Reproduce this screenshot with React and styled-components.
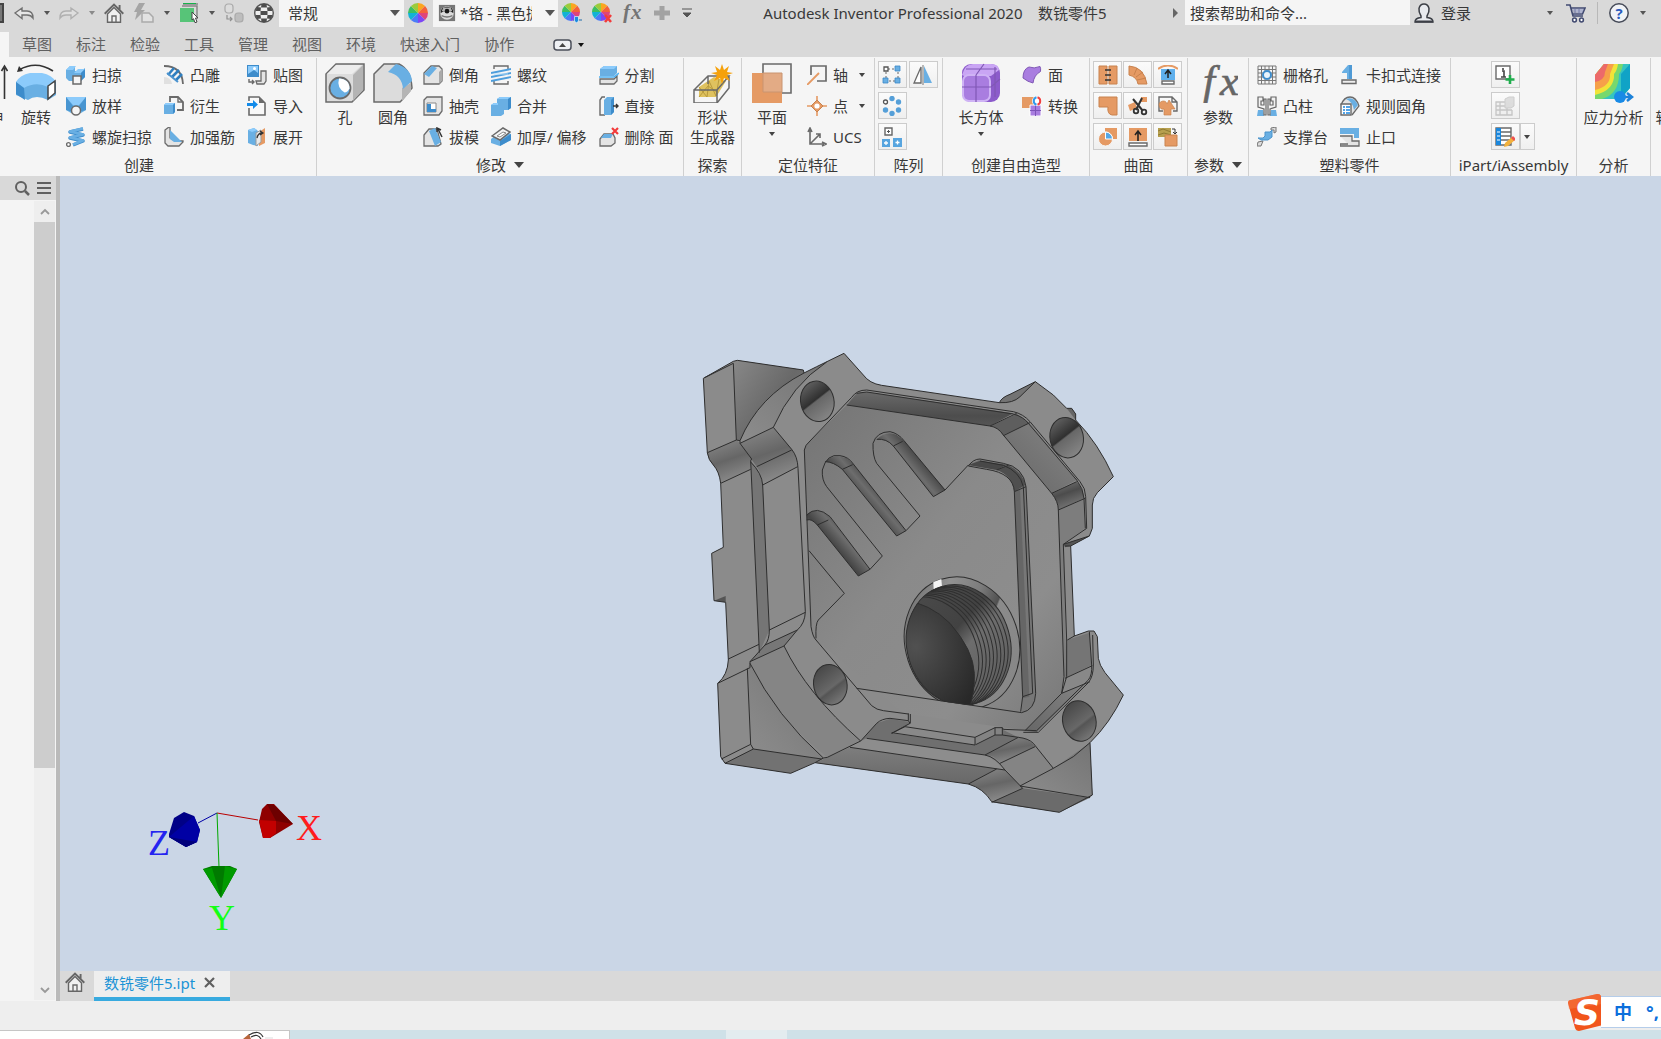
import React, { useState } from "react";
import styled, { createGlobalStyle } from "styled-components";

const color = {
  chrome: "#d9d9d9",
  ribbon: "#f5f5f5",
  canvas: "#cad6e6",
  line: "#d0d0d0",
  text: "#383838",
  muted: "#606060",
  blue: "#69afe3",
  blueDark: "#3d8ccb",
  blueLight: "#8ccbfb",
  orange: "#e59a64",
  orangeDark: "#c8824e",
  gray: "#6a6a6a",
  purple: "#a97de0",
};

const GlobalStyle = createGlobalStyle`
  * {
    box-sizing: border-box;
  }

  body {
    margin: 0;
    overflow: hidden;
    background: ${color.chrome};
    color: ${color.text};
    font-family: "Noto Sans", "Noto Sans CJK SC", sans-serif;
    font-size: 15px;
    line-height: 20px;
  }

  button,
  select,
  input {
    margin: 0;
    padding: 0;
    border: 0;
    border-radius: 0;
    background: none;
    color: inherit;
    font: inherit;
  }

  svg {
    display: block;
    flex: none;
  }
`;

/* ---------- icons ---------- */

const wheelColors = ["#fba51f", "#f4613b", "#e0447a", "#7d46f5", "#4b7bf7", "#12b3d6", "#3cbf62", "#9ccb3b"];

function wedge(i, cx, cy, r) {
  const a = (i * Math.PI) / 4 - Math.PI / 2;
  const b = a + Math.PI / 4;
  return `M${cx} ${cy}L${cx + r * Math.cos(a)} ${cy + r * Math.sin(a)}A${r} ${r} 0 0 1 ${cx + r * Math.cos(b)} ${cy + r * Math.sin(b)}Z`;
}

const Wheel = ({ cx = 10, cy = 10, r = 10 }) => wheelColors.map((fill, i) => <path key={fill} d={wedge(i, cx, cy, r)} fill={fill} />);

const g = { fill: "none", stroke: color.gray, strokeWidth: 1.4 };
const soft = { fill: "#e4e4e4", stroke: color.gray, strokeWidth: 1.3 };
const home = (
  <>
    <path d="M3.500 11v8.300h13V11L10 4.500z" fill="#f0f0f0" stroke="#666" strokeWidth="1.400" />
    <path d="M.700 10.800 10 1.600l9.300 9.200M15.600 2v5" fill="none" stroke="#666" strokeWidth="1.900" />
    <path d="M8 19v-6h4v6" {...g} />
  </>
);

const glyphs = {
  save: <path d="M1 1h18v18H1z" fill="#777" stroke="#444" strokeWidth="2" />,
  undo: <path d="M1 10 8 5v3h5q6 0 6 7-2-3-6-3H8v3.500z" fill="#e6e6e6" stroke="#707070" strokeWidth="1.400" />,
  redo: <path d="m19 10-7-5v3H7q-6 0-6 7 2-3 6-3h5v3.500z" fill="#dedede" stroke="#b0b0b0" strokeWidth="1.400" />,
  home,
  update: (
    <>
      <path d="M5 0h6L7 7h4L1 17l2-8H0z" fill="#a5a5a5" />
      <path d="M8 10h7l4 4v5H8z" fill="#e2e2e2" stroke="#aaa" strokeWidth="1.500" />
    </>
  ),
  pick: (
    <>
      <path d="M1 5h14v14H1z" fill="#57c478" />
      <path d="M3 3h15v12M4 1h15" fill="none" stroke="#888" strokeWidth="1.500" />
      <path d="M4 0h13" stroke="#16b24b" strokeWidth="2" />
      <path d="m13 9 6 6h-2.500l1.500 4-2 .7-1.500-4L13 17z" fill="#fff" stroke="#444" />
    </>
  ),
  copyprops: (
    <g fill="#dcdcdc" stroke="#aaa" strokeWidth="1.200">
      <rect x="1" y="1" width="8" height="9" rx="3" />
      <rect x="11" y="10" width="8" height="9" rx="3" fill="#bdbdbd" />
      <path d="M3 12v4h5m-2-2 2 2-2 2" fill="none" stroke="#909090" />
    </g>
  ),
  checker: (
    <>
      <circle cx="10" cy="10" r="9.300" fill="#eee" stroke="#555" strokeWidth="1.400" />
      <path d="M7.500 1h5l.5 3.500H7zM3 4l4 .5L6.500 8H1.500zM13 4.500 17 4l1.500 4h-5zM6.500 8h7v4h-7zM1.500 12h5l.5 3.500-4 .5zM13.500 12h5L17 16l-4-.5zM7 15.500h6l-.5 3.500h-5z" fill="#4d4d4d" />
    </>
  ),
  wheel: <Wheel />,
  sphere: (
    <>
      <path d="M1 1h18v18H1z" fill="#777" />
      <circle cx="10" cy="10" r="7.500" fill="#dadada" />
      <path d="M3 10q0-7 7-7t7 7q-7-5-14 0z" fill="#161616" />
      <path d="M6 4h8l2 4H4z" fill="#d9d9d9" opacity=".8" />
      <circle cx="10" cy="8" r="2.600" fill="#161616" />
      <path d="M4 13q6 3 12 0" stroke="#777" strokeWidth="1.500" fill="none" />
    </>
  ),
  adjust: (
    <>
      <Wheel cx={9} cy={9} r={9} />
      <path d="M11 17h9" stroke="#4a86b5" strokeWidth="1.300" />
      <path d="M12.500 13.500h4V18l-2 2-2-2z" fill="#1c8be0" stroke="#fff" strokeWidth=".6" />
    </>
  ),
  clear: (
    <>
      <Wheel cx={9} cy={9} r={9} />
      <path d="m13 12 6 7m0-7-6 7" stroke="#f23b3b" strokeWidth="2.600" />
    </>
  ),
  fx: (
    <text x="1 9" y="16" fontFamily="Liberation Serif" fontStyle="italic" fontWeight="bold" fontSize="21" fill="#747474">
      fx
    </text>
  ),
  plus: <path d="M7.500 3h5v4.500H18v5h-5.500V17h-5v-4.500H2v-5h5.500z" fill="#a2a2a2" />,
  user: (
    <>
      <path d="M1 19q0-4 6-4.500V13Q4.500 9 5 5.500 6 1 10 1t5 4.500Q15.500 9 13 13v1.500q6 .5 6 4.500z" fill="#e8eaee" stroke="#3c3f46" strokeWidth="1.500" />
      <path d="M1 18.500h18" stroke="#3c3f46" strokeWidth="2" />
    </>
  ),
  cart: (
    <>
      <path d="M0 2h4l3 11h10M5 5h14l-2.500 6H6.500" fill="#dfe3f1" stroke="#414a70" strokeWidth="1.600" />
      <path d="M6 7h12M7 9h10M9 5v6m4-6v6" stroke="#6870a0" strokeWidth=".8" />
      <circle cx="8.500" cy="17" r="1.900" fill="#fff" stroke="#414a70" strokeWidth="1.500" />
      <circle cx="15.500" cy="17" r="1.900" fill="#fff" stroke="#414a70" strokeWidth="1.500" />
    </>
  ),
  help: (
    <>
      <circle cx="10" cy="10" r="9.200" fill="#f1f3f7" stroke="#464b58" strokeWidth="1.500" />
      <text x="10" y="15.500" textAnchor="middle" fontFamily="Open Sans" fontWeight="bold" fontSize="15" fill="#2c5bbd">
        ?
      </text>
    </>
  ),

  sweep: (
    <>
      <path d="m0 5 4-4h5v5h6l4-3v9l-4 4H3l-3-3z" fill={color.blue} />
      <path d="m0 5 4-4h6L7 5zM8 8l4-4h7l-4 4z" fill={color.blueLight} />
      <path d="M15 8v8l4-4V4z" fill={color.blueDark} />
      <path d="M7 11h8v8H7z" fill="#f5f5f5" stroke={color.gray} strokeWidth="1.500" />
    </>
  ),
  loft: (
    <>
      <path d="M0 1h20v13l-5 3H5l-5-3z" fill={color.blue} />
      <path d="M0 1h20l-7 8H7z" fill={color.blueLight} />
      <path d="m0 1 7 9v6L0 14zM20 1l-7 9v6l7-2z" fill={color.blueDark} opacity=".75" />
      <circle cx="10" cy="14.500" r="4.500" fill="#f5f5f5" stroke={color.gray} strokeWidth="1.500" />
    </>
  ),
  coil: (
    <>
      <path d="M17 2 4 5l13 3-13 3 13 3-10 4" fill="none" stroke={color.blueDark} strokeWidth="3.500" strokeLinejoin="round" />
      <path d="M17 1.500 4 4.500l13 3-13 3 13 3-10 4" fill="none" stroke={color.blue} strokeWidth="2.500" strokeLinejoin="round" />
      <circle cx="2.500" cy="17.500" r="1.900" {...g} fill="#fff" />
    </>
  ),
  emboss: (
    <>
      <path d="M0 12q7 0 8 7H0z" fill="#e0e0e0" />
      <path d="M0 1q18 0 19 18" {...g} strokeWidth="1.800" />
      <path d="m4 10 6-7M8 12l7-7m-3 10 6-6" stroke="#2f7fc0" strokeWidth="2.600" />
      <path d="m3 8 11 9" stroke="#4b93cf" strokeWidth="2" />
    </>
  ),
  derive: (
    <>
      <path d="M6 6V1h8l5 5v8h-6" {...g} strokeWidth="1.800" />
      <path d="M14 1v5h5" {...g} />
      <path d="m0 9 2-2h9v9l-2 2H0z" fill={color.blue} />
      <path d="m0 9 2-2h9L9 9z" fill={color.blueLight} />
      <path d="M9 9v9l2-2V7z" fill={color.blueDark} />
    </>
  ),
  rib: (
    <>
      <path d="M1 3 5 0h1v11l5 3h8v1l-4 4H4l-3-3z" {...soft} />
      <path d="M6 3v9l4 3h8z" fill={color.blue} />
    </>
  ),
  decal: (
    <>
      <path d="M14 6h5v10l-2 3h-7l-1-3h5z" {...soft} />
      <path d="M0 0h12v12H0z" fill={color.blueDark} />
      <path d="M1 1h10v7L7 5 1 9z" fill={color.blueLight} />
      <circle cx="7.500" cy="3.500" r="1.500" fill="#fff" />
      <path d="M2 14v3h5m-2-2 2 2-2 2" {...g} />
    </>
  ),
  import: (
    <>
      <path d="M2 5V1h10l6 6v12H2v-7" fill="#f8f8f8" stroke={color.gray} strokeWidth="1.600" />
      <path d="M12 1v6h6z" fill="#6b6b6b" />
      <path d="M0 7h6V4l5 4.500-5 4.500v-3H0z" fill="#128bea" />
    </>
  ),
  unfold: (
    <>
      <path d="m1 3 6-2 4 3v15l-5-1-5-2z" fill={color.blue} />
      <path d="m1 3 6-2 3 2-5 2z" fill={color.blueLight} />
      <path d="m12 5 6-4v15l-6 3z" fill={color.orange} />
      <path d="m9 6 5-3v12l-5 4z" fill="#e9e9e9" stroke="#9b9b9b" />
      <path d="M10 11q1-5 5-5m-2-2 3 2-3 2" fill="none" stroke="#333" strokeWidth="1.300" />
    </>
  ),
  chamfer: (
    <>
      <path d="M1 8 8 1h8l3 3v12l-3 3H1z" {...soft} />
      <path d="m1 9 8-8 5 2-8 9z" fill={color.blue} />
      <path d="M16 7v12l3-3V4z" fill="#aaa" />
    </>
  ),
  shell: (
    <>
      <path d="m1 4 3-3h15v14l-3 4H1z" {...soft} />
      <path d="M4 7h9v9H4z" fill="#fff" stroke="#888" />
      <path d="M4 8h4v5h5v3H4z" fill={color.blueDark} />
    </>
  ),
  draft: (
    <>
      <path d="M1 19V8l5-6h8l4 15-3 2z" {...soft} />
      <path d="m6 4 6-3 6 14-6 4z" fill={color.blue} />
      <path d="m19 10-4-8m-1 3V1l4 2" fill="none" stroke="#333" strokeWidth="1.500" />
    </>
  ),
  thread: (
    <>
      <path d="M3 4V1h14v3M3 16v3h14v-3" {...g} />
      <path d="M0 8 20 4M0 12l20-4M0 16l20-4" stroke="#4e9edc" strokeWidth="1.900" />
      <path d="M3 9h14" stroke="#b8dffa" />
    </>
  ),
  combine: (
    <>
      <path d="m6 3 3-2h11v11l-3 2h-4v4l-3 2H0V9l3-2h3z" fill={color.blue} />
      <path d="m6 3 3-2h11l-3 2zM0 9l3-2h4v2z" fill={color.blueLight} />
      <path d="M17 3v11l3-2V1z" fill={color.blueDark} />
    </>
  ),
  thicken: (
    <>
      <path d="m0 12 11-8 9 3v6l-11 6-9-3z" fill={color.blue} />
      <path d="M9 14v5l11-6V7z" fill={color.blueDark} />
      <path d="m1 9 11-8 7 4-10 8z" fill="#f4f4f4" stroke={color.gray} strokeWidth="1.500" />
      <path d="m6 9 6-4 3 1-6 4z" fill="#fff" stroke="#888" />
    </>
  ),
  split: (
    <>
      <path d="m1 4 4-3h13v7l-3 3H1z" fill={color.blue} />
      <path d="m1 4 4-3h13l-3 3z" fill={color.blueLight} />
      <path d="M1 14h14l3-3v5l-3 3H1z" {...soft} />
      <path d="M0 12h15l5-4" fill="none" stroke="#4bb1f5" strokeWidth="1.500" />
    </>
  ),
  direct: (
    <>
      <path d="M6 1H3L1 4v15h5" {...g} />
      <path d="m5 4 3-3h7v15l-3 3H5z" fill={color.blue} />
      <path d="M12 4v15l3-3V1z" fill={color.blueDark} />
      <path d="M14 10h5m-2-2 2 2-2 2" fill="none" stroke="#333" strokeWidth="1.400" />
    </>
  ),
  deleteFace: (
    <>
      <path d="m1 12 4-5h9l2 4v5l-4 3H1z" {...soft} />
      <path d="m2 11 3-4h9l-2 4z" fill={color.blue} />
      <path d="m13 1 6 6m0-6-6 6" stroke="#f23b3b" strokeWidth="2.200" />
    </>
  ),
  axis: (
    <>
      <path d="M4 10V1h15v15H10" {...g} strokeWidth="1.700" />
      <path d="M0 20 12 8" stroke={color.orange} strokeWidth="1.900" />
    </>
  ),
  point: (
    <>
      <path d="M10 0v20M0 10h20" stroke={color.orange} strokeWidth="1.600" />
      <path d="m10 4 6 6-6 6-6-6z" fill={color.orange} stroke={color.orangeDark} />
      <circle cx="10" cy="10" r="2.600" fill="#fff" />
    </>
  ),
  ucs: <path d="M3 3v14h14M1 5l2-4 2 4M15 15l4 2-4 2M3 17 13 7m-4 0h4v4" {...g} strokeWidth="1.600" />,
  face: <path d="M1 13Q1 4 7 2q5 2 11-.500 1 2 .500 5Q12 10 11 18 6 17 1 13z" fill={color.purple} stroke="#8058b5" />,
  convert: (
    <>
      <path d="M0 1h12v11H0z" fill={color.orange} />
      <path d="M8 9h11v11H8z" fill={color.purple} stroke="#fff" />
      <path d="M13.500 9v11M8 14.500h11" stroke="#7d54b8" />
      <circle cx="15" cy="5" r="5" fill="#fff" />
      <path d="M14.500 1.200a4 4 0 0 0 0 7.600" fill="none" stroke="#3199eb" strokeWidth="2" />
      <path d="M15.500 1.200a4 4 0 0 1 0 7.600" fill="none" stroke="#ef4040" strokeWidth="2" />
    </>
  ),
  rectPattern: (
    <>
      <path d="M6 4h7M4 7v6m12-6v6M7 16h6" stroke="#666" strokeDasharray="2 2" />
      <path d="M2 2h4v4H2z" fill="#fff" stroke="#555" strokeWidth="1.300" />
      <path d="M13 1h5v5h-5zM1 13h5v5H1zM13 13h5v5h-5z" fill={color.blue} stroke="#3a89c8" strokeWidth=".8" />
    </>
  ),
  mirror: (
    <>
      <path d="M8 2v16H1z" fill="#fff" stroke={color.gray} strokeWidth="1.300" />
      <path d="M11 1v17h8z" fill={color.blue} />
      <path d="M10 0v20" stroke="#777" />
    </>
  ),
  circPattern: (
    <>
      <circle cx="3.500" cy="6" r="2" fill="#fff" stroke="#555" strokeWidth="1.300" />
      {[[10, 2.500], [16.500, 6], [16.500, 14], [10, 17.500], [3.500, 14]].map(([x, y]) => (
        <circle key={`${x}-${y}`} cx={x} cy={y} r="2.700" fill="#559fd8" />
      ))}
    </>
  ),
  sketchPattern: (
    <>
      <path d="M3 1h7v7H3z" fill="#fff" stroke="#666" strokeWidth="1.400" />
      <path d="M0 12h8v8H0zM11 11h9v9h-9z" fill="#58a5df" />
      <path d="M6.500 3v3M5 4.500h3" stroke="#555" />
      <path d="M4 14v4m-2-2h4m9.500-2.500v4m-2-2h4" stroke="#fff" strokeWidth="1.300" />
    </>
  ),
  stitch: (
    <>
      <path d="M1 1h8v18H1zM11 1h8v18h-8z" fill={color.orange} stroke={color.orangeDark} />
      <path d="M7 5h6M7 10h6M7 15h6" stroke="#333" strokeWidth="1.500" />
    </>
  ),
  ruled: (
    <>
      <path d="M1 1q15 1 18 18h-9Q9 12 1 10z" fill={color.orange} stroke={color.orangeDark} />
      <path d="m6 10 3-7m-1 9 7-5m-6 8 9-2" stroke={color.orangeDark} />
    </>
  ),
  replace: (
    <>
      <path d="M0 4q10-7 20 0" fill="none" stroke={color.orange} strokeWidth="2" />
      <path d="M3 4h14v11H3z" fill="#5fb0ed" />
      <path d="M10 13V6M7 9l3-4 3 4" fill="none" stroke="#222" strokeWidth="1.500" />
      <path d="M4 16h12v3H4z" {...g} fill="#fff" />
    </>
  ),
  patch: <path d="M1 1h18v18h-5q-5-1-4-8H1z" fill={color.orange} stroke={color.orangeDark} />,
  trim: (
    <>
      <path d="m0 9 7-3 2 6-7 3zM13 1h6v5h-6z" fill={color.orange} />
      <path d="m5 3 10 12M14 2 8 14" stroke="#333" strokeWidth="2" />
      <circle cx="8" cy="15" r="2.300" fill="none" stroke="#333" strokeWidth="1.800" />
      <circle cx="16" cy="16" r="2.300" fill="none" stroke="#333" strokeWidth="1.800" />
    </>
  ),
  repair: (
    <>
      <path d="M5 15H1V1h13l5 5v9h-4M14 1v5h5" {...g} />
      <path d="m11 4 6 9h-4v6H6v-6a4 4 0 1 1 3-5z" fill={color.orange} stroke={color.orangeDark} strokeWidth=".7" />
    </>
  ),
  sculpt: (
    <>
      <path d="M7 1h12v11H7z" fill={color.orange} />
      <circle cx="7.500" cy="12" r="7" fill={color.orange} stroke="#f5f5f5" />
      <path d="M7.500 5a7 7 0 0 1 7 7h-7z" fill="#55a7e6" stroke="#fff" />
    </>
  ),
  extend: (
    <>
      <path d="M1 1h18v13H1z" fill={color.orange} />
      <path d="M10 14V5M7 8l3-4 3 4" fill="none" stroke="#222" strokeWidth="1.600" />
      <path d="M1 16h18v3H1z" {...g} fill="#fff" />
    </>
  ),
  copyObject: (
    <>
      <path d="M0 1h13v9H0z" fill="#b7a04f" />
      <path d="m0 4 5-2 8 3M0 8l6-2 7 2" stroke="#8f7a33" fill="none" />
      <path d="M7 8h12v11H7z" fill={color.orange} stroke="#c9834f" />
      <path d="M14 2h3v4m-2-1 2 2 2-2" fill="none" stroke="#333" />
    </>
  ),
  grill: (
    <>
      <path d="M1 1h18v18H1zM4.500 1v18M8 1v18M12 1v18M15.500 1v18M1 4.500h18M1 8h18M1 12h18M1 15.500h18" fill="none" stroke="#777" />
      <circle cx="10" cy="10" r="4" fill="#e9f4fc" stroke={color.blueDark} strokeWidth="2" />
    </>
  ),
  boss: (
    <>
      <path d="M1 14h5l1 6H0zM14 14h5l1 6h-7z" fill={color.blue} />
      <path d="M1 1h5v4H4v4h3V3h2v16H7v-6l-6-2zM19 1h-5v4h2v4h-3V3h-2v16h2v-6l6-2z" fill="#f2f2f2" stroke="#666" strokeWidth="1.200" />
    </>
  ),
  rest: (
    <>
      <path d="m14 1 5-1v5l-2 1v-3h-3zM1 15l5-1-2 5H0z" fill="#ddd" stroke="#777" />
      <path d="M1 11h5l2-2V5h5l2-2v7l-4 3H4z" fill={color.blue} stroke="#4b93cb" />
    </>
  ),
  snap: (
    <>
      <path d="M2 7 8 0h4v14H7V8H2z" fill={color.blue} />
      <path d="M9 0h3v14h-3z" fill={color.blueDark} opacity=".6" />
      <path d="M2 15h14v3.500H2z" {...g} fill="#eee" />
    </>
  ),
  ruleFillet: (
    <>
      <path d="M1 9Q4 1 10 1t9 9l-7 9" {...soft} />
      <path d="M6 3q8-3 12 6l-4 5Q13 6 6 3z" fill={color.blue} />
      <path d="M1 8h10v11H1z" {...g} fill="#fff" />
      <path d="M3 11h2m1 0h4M3 14h2m1 0h4M3 17h2m1 0h4" stroke="#1c87df" strokeWidth="1.600" />
    </>
  ),
  lip: (
    <>
      <path d="M0 1h19v10h-5V7H0z" fill={color.blue} />
      <path d="M0 9h12v5h7v5H0v-2h8" {...soft} />
    </>
  ),
  ipart: (
    <>
      <path d="M1 1h14v13H1z" {...g} fill="#fff" />
      <path d="M7 6h2v6M6 12h5M8 3v2" fill="none" stroke="#444" strokeWidth="1.600" />
      <path d="M15 10v9m-4.500-4.500h9" stroke="#20ad4d" strokeWidth="2.600" />
    </>
  ),
  factory: (
    <g opacity=".6">
      <path d="M1 6h11v13H1zM1 10h11M1 14h16M5 6v13M12 14v5h5v-5" fill="#eee" stroke="#a8a8a8" strokeWidth="1.300" />
      <path d="m10 3 4-2h5v9l-3 2h-6z" fill="#ccc" stroke="#b2b2b2" />
    </g>
  ),
  author: (
    <>
      <path d="M1 1h15v17H1z" {...g} fill="#fff" />
      <path d="M1 5h15M1 9h15M1 13h15" {...g} />
      <path d="M1 1h5v17H1z" fill="#1a87dd" />
      <path d="M2 5h3M2 9h3M2 13h3" stroke="#fff" />
      <path d="m9 20 1-4 7-6 3 3-7 6z" fill="#f3b23d" />
      <path d="m16 11 2-2 3 3-2 2z" fill="#ef5350" />
    </>
  ),

  extrude: (
    <>
      <path d="M2 8h28l2-6v36H2z" fill="#bcdcf3" />
      <path d="M36.500 36V5m-3 3 3-5 3 5" fill="none" stroke="#333" strokeWidth="1.600" />
    </>
  ),
  revolve: (
    <>
      <path d="M0 19Q20 5 40 19v13l-8 5q-12-6-20 0L0 32z" fill={color.blue} />
      <path d="M0 19Q4 12 14 10h12q10 2 14 9l-8 5Q20 18 8 25z" fill={color.blueLight} />
      <path d="m0 19 8 6 1 12-9-6z" fill={color.blueDark} />
      <path d="m32 23 7-5v12l-7 6z" fill="#fff" stroke="#444" strokeWidth="1.500" />
      <path d="M37 8Q20-3 3 7" fill="none" stroke="#333" strokeWidth="1.700" />
      <path d="m1 9 2-6 4 5z" fill="#333" />
    </>
  ),
  hole: (
    <>
      <path d="M1 11 11 1h28v26L27 39H1z" fill="#dcdcdc" stroke={color.gray} strokeWidth="1.500" />
      <path d="M28 12v26l10-11V2z" fill="#b4b4b4" />
      <path d="M2 11 11 2h26l-10 9z" fill="#ededed" />
      <circle cx="15" cy="25" r="10.500" fill={color.blue} stroke={color.gray} strokeWidth="1.800" />
      <path d="M14 15.500a9.500 9.500 0 0 1 10.500 10q-2 4-5 4-8-5-5.500-14z" fill="#fff" />
    </>
  ),
  fillet: (
    <>
      <path d="M1 11 11 1h15q12 6 13 24l-10 12-2 2H1z" fill="#dcdcdc" stroke={color.gray} strokeWidth="1.500" />
      <path d="M29 25v13l9-10v-8z" fill="#b5b5b5" />
      <path d="M15 9 23 1q15 4 16 17l-9 8Q29 12 15 9z" fill={color.blue} />
    </>
  ),
  shape: (
    <>
      <path d="m6 24 15-10 12 4-10 16H6z" fill="#dfc25f" />
      <path d="m6 24 8 10 2-16 7 15 3-17M6 34l9-11 9 6" fill="none" stroke="#b99b3c" />
      <path d="M1 27h23v13H1zM1 27l14-14h21L24 27M36 13v12L24 40M15 13v8" fill="none" stroke={color.gray} strokeWidth="1.500" />
      <path d="m29 1 2 6 5-4-2 6 6 1-6 2 3 6-6-3-2 6-2-6-6 3 3-6-6-2 6-1-2-6 5 4z" fill="#f5a10a" />
    </>
  ),
  plane: (
    <>
      <path d="M11 1h28v29H11z" fill="#f5f5f5" stroke={color.gray} strokeWidth="1.600" />
      <path d="M0 10h30v30H0z" fill={color.orange} />
      <path d="M11 10h19v19H11z" fill="#e3ab85" stroke="#c99470" />
    </>
  ),
  box: (
    <>
      <rect x="1" y="1" width="38" height="38" rx="9" fill="#8c5bcb" />
      <path d="M1 12Q4 1 12 1h18q8 0 8 6l-8 6H3z" fill="#c9a5f4" />
      <rect x="1" y="11" width="29" height="28" rx="7" fill="#cfb3f5" />
      <rect x="3" y="13" width="25" height="24" rx="5" fill={color.purple} />
      <path d="M15 12v27M1 24h29l9-8M15 12l8-11M5 6h31M34 4v30" fill="none" stroke="#8058b5" strokeWidth="1.200" />
    </>
  ),
  params: (
    <text x="5 22" y="32" fontFamily="Liberation Serif" fontStyle="italic" fontSize="43" fill="#666" stroke="#666" strokeWidth=".6">
      fx
    </text>
  ),
  stress: (
    <>
      <path d="M1 12 10 1h26v24l-9 11H1z" fill="#35c4c1" />
      <path d="M27 11v24l9-10V1z" fill="#10a3c6" />
      <path d="M1 12 10 1h19q-1 7-4 10 0 20-17 25H1z" fill="#77d86e" />
      <path d="M1 12 10 1h14q-1 7-4 10 1 16-19 21z" fill="#f2e338" />
      <path d="M1 12 10 1h10l-4 10q1 12-15 16z" fill="#f6a049" />
      <path d="m1 12 9-11h4l-3 8q0 8-10 10z" fill="#ec6a6a" />
      <path d="M27 34h9m-3-4 5 4-5 4" fill="none" stroke="#1d82d9" strokeWidth="2.500" />
      <circle cx="26" cy="34" r="6" fill="#188ae6" />
    </>
  ),
};

const Icon = ({ name, size = 20, box = size }) => (
  <svg width={size} height={size} viewBox={`0 0 ${box} ${box}`} aria-hidden="true">
    {glyphs[name]}
  </svg>
);

const Caret = styled.span`
  flex: none;
  width: 0;
  height: 0;
  border: ${(props) => props.$size || 3}px solid transparent;
  border-bottom-width: 0;
  border-top: ${(props) => (props.$size || 3) + 1}px solid ${(props) => props.$tone || "#444"};
`;

/* ---------- title bar ---------- */

const Window = styled.div`
  display: flex;
  flex-direction: column;
  height: 100vh;
  overflow: hidden;
`;

const TitleBar = styled.header`
  display: flex;
  align-items: center;
  height: 27px;
  padding-bottom: 1px;
  white-space: nowrap;
`;

const QuickAccess = styled.div`
  display: flex;
  align-items: center;
  gap: ${(props) => props.$gap || 10}px;
  padding: 0 ${(props) => props.$end || 5}px 0 ${(props) => props.$start || 0}px;
  margin-left: ${(props) => (props.$bleed ? "-16px" : 0)};

  & ${Caret} {
    margin-right: -1px;
  }
`;

const QuickButton = styled.button`
  display: flex;
  flex: none;
`;

const Combo = styled.label`
  display: flex;
  align-items: center;
  width: 125px;
  height: 27px;
  padding: 0 ${(props) => (props.$thumb ? 3 : 4)}px 0 ${(props) => (props.$thumb ? 5 : 9)}px;
  gap: 4px;
  background: ${color.ribbon};

  & select {
    flex: 1;
    min-width: 0;
    height: 27px;
    margin-right: ${(props) => (props.$thumb ? 9 : 0)}px;
    appearance: none;
    outline: 0;
  }
`;

const Title = styled.h1`
  flex: 1;
  margin: 0;
  font-size: 15px;
  font-weight: 400;
  text-align: center;
  white-space: pre;
`;

const SearchToggle = styled.button`
  border: 5px solid transparent;
  border-right-width: 0;
  border-left-color: #666;
`;

const Search = styled.input`
  width: 225px;
  height: 25px;
  margin: 0 4px 1px 7px;
  padding: 0 5px;
  background: ${color.ribbon};

  &::placeholder {
    color: ${color.text};
    opacity: 1;
  }
`;

const Account = styled.button`
  display: flex;
  align-items: center;
  justify-content: space-between;
  width: 139px;

  & span {
    display: flex;
    gap: 7px;
  }
`;

const Divider = styled.span`
  width: 1px;
  height: 22px;
  background: #b8b8b8;
`;

/* ---------- ribbon tabs ---------- */

const Tabs = styled.nav`
  display: flex;
  align-items: flex-end;
  height: 30px;
`;

const ActiveTab = styled.button`
  width: 9px;
  height: 25px;
  margin-right: 1px;
  background: ${color.ribbon};
`;

const Tab = styled.button`
  height: 25px;
  padding: 0 12px 2px;
  color: ${color.muted};
`;

const Minimize = styled.button`
  display: flex;
  align-items: center;
  gap: 6px;
  height: 25px;
  margin-left: 27px;
`;

/* ---------- ribbon ---------- */

const Ribbon = styled.section`
  display: flex;
  flex: none;
  height: 119px;
  overflow: hidden;
  background: ${color.ribbon};
  white-space: nowrap;
`;

const PanelBox = styled.div`
  display: flex;
  flex: none;
  flex-direction: column;
  min-width: ${(props) => props.$min || 0}px;
  margin: 1px 0 0 ${(props) => (props.$bleed ? "-38px" : 0)};
  padding: 1px 2px 0;
  border-right: 1px solid ${color.line};
`;

const PanelBody = styled.div`
  display: flex;
  justify-content: ${(props) => (props.$start ? "flex-start" : "center")};
  gap: ${(props) => props.$gap || 0}px;
  height: 94px;
  padding-left: ${(props) => props.$indent || 0}px;
`;

const PanelLabel = styled.div`
  display: flex;
  align-items: center;
  justify-content: center;
  gap: 8px;
  height: 23px;
`;

const BigButton = styled.button`
  display: flex;
  flex-direction: column;
  align-items: center;
  width: ${(props) => props.$width || 48}px;
  padding-top: 4px;

  & svg {
    margin-bottom: 4px;
  }

  & ${Caret} {
    margin-top: 5px;
  }
`;

const Column = styled.div`
  display: flex;
  flex-direction: column;
`;

const SmallButton = styled.button`
  display: flex;
  align-items: center;
  gap: 6px;
  height: 31px;
  padding: 0 6px;

  & ${Caret} {
    margin-left: 5px;
  }
`;

const TileGrid = styled.div`
  display: grid;
  grid-template-columns: ${(props) => props.$cols};
  grid-auto-rows: 27px;
  align-content: start;
  gap: 4px ${(props) => props.$gap || 0}px;
  padding: 2px 2px 0 0;
`;

const Tile = styled.button`
  display: flex;
  align-items: center;
  justify-content: center;
  border: 1px solid #cccccc;
  background: linear-gradient(#fbfbfb, #efefef);
`;

function Panel({ label, min, bleed, start, gap, indent, menu, children }) {
  return (
    <PanelBox $min={min} $bleed={bleed}>
      <PanelBody $gap={gap} $indent={indent} $start={start}>
        {children}
      </PanelBody>
      <PanelLabel>
        {label}
        {menu && <Caret $size={5} />}
      </PanelLabel>
    </PanelBox>
  );
}

function Big({ icon, lines, menu, width }) {
  return (
    <BigButton $width={width}>
      <Icon name={icon} size={40} />
      {lines.map((line) => (
        <span key={line}>{line}</span>
      ))}
      {menu && <Caret />}
    </BigButton>
  );
}

function Tools({ items }) {
  return (
    <Column>
      {items.map(([icon, label, menu]) => (
        <SmallButton key={icon}>
          <Icon name={icon} />
          {label}
          {menu && <Caret />}
        </SmallButton>
      ))}
    </Column>
  );
}

function Tiles({ names, cols, gap }) {
  return (
    <TileGrid $cols={cols} $gap={gap}>
      {names.map((name, i) =>
        name ? (
          <Tile key={name} aria-label={name}>
            <Icon name={name} />
          </Tile>
        ) : (
          <span key={i} />
        )
      )}
    </TileGrid>
  );
}

/* ---------- work area ---------- */

const Work = styled.div`
  display: flex;
  flex: 1;
  min-height: 0;
`;

const Browser = styled.aside`
  display: flex;
  flex: none;
  flex-direction: column;
  width: 60px;
  border-right: 4px solid #bababa;
  background: #f4f4f4;
`;

const BrowserHead = styled.div`
  display: flex;
  align-items: center;
  justify-content: flex-end;
  gap: 7px;
  height: 24px;
  padding-right: 5px;
  background: ${color.chrome};
`;

const ScrollTrack = styled.div`
  display: flex;
  flex: 1;
  flex-direction: column;
  align-self: flex-end;
  width: 21px;
  margin: 1px 1px 1px 0;
  background: #eeeeee;
`;

const ScrollButton = styled.button`
  display: flex;
  align-items: center;
  justify-content: center;
  height: 21px;
`;

const ScrollThumb = styled.div`
  flex: 546;
  background: #cdcdcd;
`;

const ScrollRest = styled.div`
  flex: 211;
`;

const Stage = styled.main`
  display: flex;
  flex: 1;
  flex-direction: column;
  min-width: 0;
`;

const Canvas = styled.div`
  position: relative;
  flex: 1;
  min-height: 0;
  overflow: hidden;
  background: ${color.canvas};
`;

const Model = styled.svg`
  position: absolute;
  top: calc(50% - 234px);
  left: calc(50% - 171px);
`;

const Triad = styled.svg`
  position: absolute;
  bottom: 31px;
  left: 80px;
`;

const DocTabs = styled.div`
  display: flex;
  height: 30px;
  background: ${color.chrome};
`;

const HomeButton = styled.button`
  display: flex;
  padding: 1px 9px 0 5px;
`;

const DocTab = styled.div`
  display: flex;
  align-items: center;
  gap: 9px;
  padding: 0 15px 3px 10px;
  border-bottom: 4px solid #38aadf;
  background: #eeeeee;
  color: #1a93d6;
`;

const StatusBar = styled.footer`
  position: relative;
  flex: none;
  height: 29px;
  background: #eeeeee;
`;

const Ime = styled.div`
  position: absolute;
  top: -8px;
  right: 0;
  z-index: 1;
  display: flex;
  align-items: center;
`;

const ImeBar = styled.div`
  display: flex;
  align-items: center;
  gap: 14px;
  width: 60px;
  height: 32px;
  margin-left: -6px;
  padding-left: 13px;
  border: 1px solid #b5cdea;
  border-width: 1px 0;
  background: #ffffff;
  color: #0b6fdc;
  font-weight: 700;
  font-size: 18px;
`;

const Taskbar = styled.div`
  display: flex;
  flex: none;
  height: 9px;
  background: #cfe1e8;
`;

const TaskSearch = styled.div`
  display: flex;
  justify-content: flex-end;
  width: 290px;
  padding-right: 14px;
  border: 1px solid #c6c6c6;
  border-width: 1px 1px 0 0;
  background: #ffffff;
`;

const TaskItem = styled.div`
  width: 61px;
  margin-left: 436px;
  background: #e3ecef;
`;

/* Cooling block seen from the front left, drawn at three units per pixel */
function Block() {
  const edge = { fill: "none", stroke: "#2e2e2e", strokeWidth: 3, strokeLinejoin: "round" };
  const outline =
    "M40 115L130 64L142 61L340 90L342 99L380 80L462 40L520 105Q538 130 575 136L928 188Q935 172 960 163L1036 125L1090 165L1130 205H1145L1157 222V240Q1225 310 1270 410L1222 458Q1207 474 1207 495V565L1198 588L1142 618L1153 888L1195 873H1212L1222 890L1225 955Q1228 975 1245 998L1300 1065Q1260 1150 1200 1208L1207 1365L1108 1417L905 1385Q880 1345 835 1332L375 1268L302 1300L105 1270L92 1250L83 1030Q113 1005 115 960L107 787L72 782L65 640L100 622L92 430Q88 395 70 375Q55 360 52 338Z";
  const holes = [
    [382, 184],
    [1130, 293],
    [421, 1034],
    [1168, 1143],
  ];
  return (
    <Model width="450" height="480" viewBox="0 0 1350 1440" role="img" aria-label="数铣零件5">
      <defs>
        <linearGradient id="back" x1="0" y1="0" x2="1" y2=".8">
          <stop offset="0" stopColor="#888" />
          <stop offset=".6" stopColor="#696969" />
          <stop offset="1" stopColor="#7a7a7a" />
        </linearGradient>
        <linearGradient id="lugSide" x1="1" y1="0" x2="0" y2="1">
          <stop offset="0" stopColor="#747474" />
          <stop offset="1" stopColor="#8d8d8d" />
        </linearGradient>
        <linearGradient id="band" x1="0" y1="0" x2=".35" y2="1">
          <stop offset="0" stopColor="#8b8b8b" />
          <stop offset=".55" stopColor="#666" />
          <stop offset="1" stopColor="#898989" />
        </linearGradient>
        <linearGradient id="floor" x1="0" y1="0" x2="1" y2="1">
          <stop offset="0" stopColor="#747474" />
          <stop offset=".45" stopColor="#8a8a8a" />
          <stop offset=".75" stopColor="#8d8d8d" />
          <stop offset="1" stopColor="#777" />
        </linearGradient>
        <linearGradient id="wallTop" x1="0" y1="0" x2="0" y2="1">
          <stop offset="0" stopColor="#6a6a6a" />
          <stop offset=".7" stopColor="#4d4d4d" />
          <stop offset="1" stopColor="#555" />
        </linearGradient>
        <linearGradient id="wallDiag" x1="0" y1="1" x2="1" y2="0">
          <stop offset="0" stopColor="#666" />
          <stop offset="1" stopColor="#858585" />
        </linearGradient>
        <linearGradient id="wallCorner" x1="0" y1="0" x2=".4" y2="1">
          <stop offset="0" stopColor="#7c7c7c" />
          <stop offset=".5" stopColor="#4c4c4c" />
          <stop offset="1" stopColor="#777" />
        </linearGradient>
        <linearGradient id="slot" gradientUnits="userSpaceOnUse" x1="0" y1="0" x2="28" y2="-24" spreadMethod="reflect">
          <stop offset="0" stopColor="#454545" />
          <stop offset="1" stopColor="#6d6d6d" />
        </linearGradient>
        <linearGradient id="under" x1="0" y1="0" x2="0" y2="1">
          <stop offset="0" stopColor="#7d7d7d" />
          <stop offset="1" stopColor="#686868" />
        </linearGradient>
        <linearGradient id="bolt" x1=".2" y1="0" x2=".6" y2="1">
          <stop offset="0" stopColor="#666" />
          <stop offset=".48" stopColor="#303030" />
          <stop offset=".52" stopColor="#676767" />
          <stop offset="1" stopColor="#858585" />
        </linearGradient>
        <linearGradient id="boltLow" x1=".2" y1="0" x2=".6" y2="1">
          <stop offset="0" stopColor="#444" />
          <stop offset=".6" stopColor="#686868" />
          <stop offset=".66" stopColor="#555" />
          <stop offset="1" stopColor="#777" />
        </linearGradient>
        <linearGradient id="rim" x1="0" y1="0" x2="1" y2="1">
          <stop offset="0" stopColor="#606060" />
          <stop offset=".3" stopColor="#929292" />
          <stop offset=".48" stopColor="#7c7c7c" />
          <stop offset=".6" stopColor="#505050" />
          <stop offset=".61" stopColor="#8b8b8b" />
          <stop offset="1" stopColor="#858585" />
        </linearGradient>
        <linearGradient id="threads" x1="0" y1="0" x2=".5" y2="1">
          <stop offset="0" stopColor="#4c4c4c" />
          <stop offset=".5" stopColor="#424242" />
          <stop offset=".65" stopColor="#6d6d6d" />
          <stop offset="1" stopColor="#606060" />
        </linearGradient>
        <radialGradient id="dome" cx=".4" cy=".4" r=".7">
          <stop offset="0" stopColor="#515151" />
          <stop offset="1" stopColor="#282828" />
        </radialGradient>
        <clipPath id="boreClip">
          <path d="M600 660H1010V1120L600 1062Z" />
        </clipPath>
        <clipPath id="threadClip">
          <ellipse cx="806" cy="915" rx="155" ry="183" transform="rotate(-16 806 915)" />
        </clipPath>
      </defs>

      <path d={outline} fill="#8b8b8b" />

      <path d="M130 70L142 61L340 90L342 99Q205 170 150 302L139 300Z" fill="url(#back)" />
      <path d="M342 99L410 66Q305 135 250 262L150 310Q205 170 342 99Z" fill="url(#lugSide)" />
      <path d="M52 338L139 300L150 310L185 357L182 388L92 430Q88 395 70 375Q55 360 52 338Z" fill="url(#band)" />
      <path d="M150 310L250 262L305 328Q323 350 323 380L218 435Q215 400 200 380Z" fill="url(#band)" />
      <path d="M182 362Q216 400 218 435L238 870L208 938Z" fill="#757575" />
      <path d="M225 915L322 870L282 918L180 965Z" fill="#777" />
      <path d="M172 985L180 970Q260 1130 400 1254L395 1257L190 1227L182 1213Z" fill="url(#lugSide)" />
      <path d="M180 965L282 918Q350 1060 512 1203L412 1252Q255 1130 180 965Z" fill="#858585" />
      <path d="M190 1227L395 1257L302 1300L105 1270Z" fill="#727272" />
      <path d="M107 768V787L72 782Z" fill="#555" />
      <path d="M480 1222L945 1290L835 1332L375 1268Z" fill="url(#under)" />
      <path d="M530 1195L890 1245L945 1290L480 1222Z" fill="#8d8d8d" />

      {/* pocket floor and walls */}
      <path d="M343 330Q345 315 360 303L470 195L900 258L940 285L1085 460L1100 490L1122 1010L1115 1060L1010 1172L640 1120L378 900L363 860L350 520Z" fill="url(#floor)" />
      <path d="M470 195L500 160L530 156L970 220L900 258Z" fill="url(#wallTop)" />
      <path d="M900 258L980 222L1020 250L940 287Q925 262 900 258Z" fill="#5e5e5e" />
      <path d="M940 285L1020 250L1160 420L1085 460Z" fill="url(#wallDiag)" />
      <path d="M1085 460L1160 425Q1180 445 1182 475L1105 510Q1105 485 1085 460Z" fill="url(#wallCorner)" />
      <path d="M1105 510L1182 475L1186 565L1120 613L1130 1010L1122 1010Z" fill="#7d7d7d" />
      <path d="M1120 613L1198 588L1142 618L1125 622Z" fill="#555" />
      <path d="M1132 900L1198 878L1205 975L1125 1015Z" fill="#757575" />
      <path d="M1125 1015L1205 978Q1207 1005 1195 1020L1115 1060Z" fill="#888" />
      <path d="M1115 1060L1195 1025L1040 1177L1005 1172Z" fill="url(#wallDiag)" />

      {/* stepped recess */}
      <path d="M835 375L870 358L960 375Q1005 395 1008 440L1037 1060Q1035 1110 995 1118L998 1070L973 455Q968 400 920 390Z" fill="#777" />
      <path d="M835 375L870 362L950 375L920 390Z" fill="#484848" />
      <path d="M920 390L955 376Q1000 400 1005 435L973 455Q965 405 920 390Z" fill="#4f4f4f" />
      <path d="M973 455L990 448L1018 1070L998 1075Z" fill="#666" />

      {/* fingers */}
      <g fill="url(#slot)">
        <path d="M350 525Q365 505 400 516L420 532L540 688L505 708L382 555Q365 535 350 540Z" />
        <path d="M405 365Q430 340 470 355L490 372L648 572L620 588L457 388Q430 365 405 365Z" />
        <path d="M560 298Q590 270 620 285L642 302L765 450L730 470L610 318Q590 295 560 298Z" />
      </g>

      {/* threaded bore */}
      <g clipPath="url(#boreClip)">
        <ellipse cx="816" cy="909" rx="170" ry="201" transform="rotate(-18 816 909)" fill="url(#rim)" stroke="#2e2e2e" strokeWidth="3" />
        <path d="M730 726L754 717L756 740L731 748Z" fill="#f4f4f4" />
        <ellipse cx="806" cy="915" rx="155" ry="183" transform="rotate(-16 806 915)" fill="url(#threads)" />
        <g clipPath="url(#threadClip)" fill="none" stroke="#2f2f2f" strokeWidth="3">
          {[0, 1, 2, 3, 4, 5, 6, 7, 8].map((i) => (
            <ellipse key={i} cx={798 - i * 11} cy={918 + i * 4} rx="153" ry="182" transform={`rotate(-18 ${798 - i * 11} ${918 + i * 4})`} />
          ))}
          <path d="M640 780Q720 790 780 850Q850 930 853 1000Q855 1060 835 1110L700 1130L560 980Z" fill="url(#dome)" />
        </g>
        <ellipse cx="806" cy="915" rx="155" ry="183" transform="rotate(-16 806 915)" {...edge} />
      </g>

      {/* lower lips */}
      <path d="M512 1203L560 1150L600 1136L655 1145L660 1152L605 1180L855 1215V1192L915 1163H937L940 1170L985 1192L885 1245L530 1195Z" fill="#6f6f6f" />
      <path d="M605 1178L650 1160L855 1192V1215Z" fill="#898989" />
      <path d="M855 1192L915 1163H937V1185H915L857 1214Z" fill="#838383" />
      <path d="M885 1245L985 1192Q1015 1195 1030 1210L1090 1285L990 1338Q950 1290 930 1270Z" fill="#848484" />
      <path d="M885 1245L985 1192Q1015 1195 1035 1220L930 1270Q915 1245 885 1245Z" fill="url(#band)" />
      <path d="M835 1332L920 1287L945 1290L998 1345L910 1387Q880 1345 835 1332Z" fill="url(#band)" />
      <path d="M998 1345L1200 1373L1108 1417L905 1387Z" fill="#6b6b6b" />
      <path d="M990 1338L1090 1285L1200 1208L1207 1365L1200 1373Z" fill="url(#lugSide)" />
      <path d="M928 188Q935 172 960 163L1036 125L990 170Q970 190 928 188Z" fill="#737373" />
      <path d="M1130 205H1145L1157 222V240Z" fill="#666" />

      {holes.map(([x, y], i) => (
        <ellipse key={x} cx={x} cy={y} rx="50" ry="61" transform={`rotate(-12 ${x} ${y})`} fill={i > 1 ? "url(#boltLow)" : "url(#bolt)"} stroke="#2e2e2e" strokeWidth="3" />
      ))}

      <g {...edge}>
        <path d={outline} />
        <path d="M44 113L130 70L139 300L52 338M139 300L150 302M342 99Q205 170 150 302V310L250 262Q305 135 410 66M250 262L305 328Q323 350 324 385L346 815Q345 850 322 870L282 918Q350 1060 512 1203" />
        <path d="M150 310L185 357L182 362L208 938M182 366Q216 400 218 435L238 870Q238 900 225 915L180 965V983L83 1030M200 380L305 330M218 435L323 380M92 430L182 388" />
        <path d="M238 870L346 817M225 915L322 870M180 965L282 918M115 957L207 913M172 985L182 1213L94 1257M182 1213L190 1227L105 1270M190 1227L395 1257M180 970Q260 1130 400 1254L412 1252L512 1203M400 1254L375 1268" />
        <path d="M512 1203L560 1150Q575 1136 600 1135L655 1142L660 1150M605 1180L645 1160L855 1192V1215L605 1178M530 1195L885 1245Q915 1250 945 1290L998 1345M480 1222L945 1290M660 1150L605 1180M655 1120V1142M661 1122V1150" />
        <path d="M343 330Q345 315 360 303L485 172Q500 150 530 150L970 215Q1000 222 1020 245L1170 425Q1187 445 1187 470L1190 565L1120 613L1130 900V1010L1115 1060L1005 1172M343 330L363 860Q368 890 378 900L545 1097Q560 1110 580 1112L655 1122" />
        <path d="M470 195L900 258Q925 262 940 285L1085 460Q1105 485 1105 510L1122 1010L1115 1060M500 160L530 156L970 222Q1000 230 1015 250L1160 420Q1180 445 1182 475L1186 565M900 258L980 220M940 287L1020 248M1085 460L1160 425M1105 510L1185 475M1120 613L1198 588M1142 618H1125" />
        <path d="M1132 900L1153 888M1198 875L1205 975Q1207 1005 1195 1020L1040 1172L940 1168L937 1163H915L855 1192M1208 885L1210 975Q1210 1010 1195 1028L1045 1177H1000M1125 1015L1207 977M1115 1060L1200 1025" />
        <path d="M835 378Q850 357 870 357L940 370Q1000 380 1008 440L1037 1060Q1035 1110 995 1118L500 1045M835 375L765 450L730 470L610 318Q590 295 560 298M835 378L890 388Q970 400 973 455L998 1070L992 1115M870 363L940 376Q990 395 1000 440L1028 1060L998 1070M920 390L955 376M973 455L1008 440" />
        <path d="M350 525Q380 495 420 530L540 688L505 708L382 555Q365 535 350 540M540 688L577 648L410 440Q395 420 397 390Q410 340 450 347Q475 350 490 372L648 572L620 588L457 388Q430 365 405 365M648 572L690 528L560 370Q548 350 549 310Q560 275 600 275Q625 280 642 302L765 450M382 555L415 540M457 388L488 374M610 318L638 304" />
        <path d="M357 632L463 760L385 840Q376 850 378 895M885 1245L985 1192M930 1270L1035 1220M835 1332L920 1287M998 1345L905 1387M990 1338L1090 1285L1030 1210Q1015 1195 985 1192L937 1185H915L857 1214M990 1338L1200 1373M1090 1285L1150 1250L1200 1208M915 1163V1185M937 1163V1185M928 188Q970 190 990 170L1036 125" />
      </g>
    </Model>
  );
}

function AxisTriad() {
  return (
    <Triad width="190" height="150" viewBox="140 790 190 150" role="img" aria-label="XYZ">
      <path d="M217 813 198 823" stroke="#0000a8" />
      <path d="m217 813 41 7" stroke="#b80000" />
      <path d="m217 813 2 54" stroke="#00a800" />
      <path d="m169 834 5-16 10-6 10 4 6 14-3 12-11 5-17-10z" fill="#000086" />
      <path d="m169 837 25-21 6 14-3 12-11 5z" fill="#0000a4" />
      <path d="m169 837 28 5-11 5z" fill="#00007a" />
      <path d="m259 822 3-13 5-5h7l19 20-23 14h-7z" fill="#8f0000" />
      <path d="m259 820 17 1v12l-6 5h-7z" fill="#c20000" />
      <path d="m267 804 7 1 19 19-17-3z" fill="#6d0000" />
      <path d="m203 869 9-3h18l7 3-16 29z" fill="#007a00" />
      <path d="m203 869 9-1 9 30zM225 866l12 3-16 29z" fill="#009a00" />
      <g fontFamily="Liberation Serif" fontSize="36" textAnchor="middle">
        <text x="159" y="855" fill="#2424f0">
          Z
        </text>
        <text x="309" y="840" fill="#ff1c1c">
          X
        </text>
        <text x="222" y="930" fill="#14ff14">
          Y
        </text>
      </g>
    </Triad>
  );
}

const tabs = ["草图", "标注", "检验", "工具", "管理", "视图", "环境", "快速入门", "协作"];

const quickTools = ["save", "undo", "", "redo", "-", "home", "update", "", "pick", "", "copyprops", "checker"];

export default function App() {
  const [query, setQuery] = useState("");

  return (
    <Window>
      <GlobalStyle />
      <TitleBar>
        <QuickAccess $bleed>
          {quickTools.map((name, i) =>
            name.length > 1 ? (
              <QuickButton key={name} aria-label={name}>
                <Icon name={name} />
              </QuickButton>
            ) : (
              <Caret key={i} $tone={name ? "#8a8a8a" : "#555"} />
            )
          )}
        </QuickAccess>
        <Combo>
          <select aria-label="材料">
            <option>常规</option>
          </select>
          <Caret $size={5} $tone="#555" />
        </Combo>
        <QuickAccess $start={4}>
          <QuickButton aria-label="外观">
            <Icon name="wheel" />
          </QuickButton>
        </QuickAccess>
        <Combo $thumb>
          <Icon name="sphere" size={18} box={20} />
          <select aria-label="外观样式">
            <option>*铬 - 黑色抛光</option>
          </select>
          <Caret $size={5} $tone="#555" />
        </Combo>
        <QuickAccess $start={4}>
          {["adjust", "clear", "fx", "plus"].map((name) => (
            <QuickButton key={name} aria-label={name}>
              <Icon name={name} />
            </QuickButton>
          ))}
          <QuickButton aria-label="自定义">
            <svg width="10" height="10" viewBox="0 0 10 10">
              <path d="M0 1h10M1 5h8L5 9z" fill="#555" stroke="#555" />
            </svg>
          </QuickButton>
        </QuickAccess>
        <Title>{"Autodesk Inventor Professional 2020    数铣零件5"}</Title>
        <SearchToggle aria-label="展开搜索" />
        <Search aria-label="搜索" placeholder="搜索帮助和命令..." value={query} onChange={(event) => setQuery(event.target.value)} />
        <Account>
          <span>
            <Icon name="user" />
            登录
          </span>
          <Caret $tone="#555" />
        </Account>
        <QuickAccess $start={13} $end={16} $gap={11}>
          <QuickButton aria-label="购物车">
            <Icon name="cart" />
          </QuickButton>
          <Divider />
          <QuickButton aria-label="帮助">
            <Icon name="help" />
          </QuickButton>
          <Caret $tone="#555" />
        </QuickAccess>
      </TitleBar>

      <Tabs>
        <ActiveTab aria-label="三维模型" />
        {tabs.map((tab) => (
          <Tab key={tab}>{tab}</Tab>
        ))}
        <Minimize aria-label="最小化功能区">
          <svg width="19" height="12" viewBox="0 0 19 12">
            <rect x="1" y="1" width="17" height="10" rx="3" fill="#eef0f4" stroke="#4b4f5a" strokeWidth="1.500" />
            <path d="m6 8 3.500-4L13 8z" fill="#444" />
          </svg>
          <Caret $tone="#111" />
        </Minimize>
      </Tabs>

      <Ribbon>
        <Panel label="创建" bleed start min={355}>
          <Big icon="extrude" lines={["拉伸"]} />
          <Big icon="revolve" lines={["旋转"]} />
          <Tools items={[["sweep", "扫掠"], ["loft", "放样"], ["coil", "螺旋扫掠"]]} />
          <Tools items={[["emboss", "凸雕"], ["derive", "衍生"], ["rib", "加强筋"]]} />
          <Tools items={[["decal", "贴图"], ["import", "导入"], ["unfold", "展开"]]} />
        </Panel>
        <Panel label="修改" menu start indent={2} min={367}>
          <Big icon="hole" lines={["孔"]} />
          <Big icon="fillet" lines={["圆角"]} />
          <Tools items={[["chamfer", "倒角"], ["shell", "抽壳"], ["draft", "拔模"]]} />
          <Tools items={[["thread", "螺纹"], ["combine", "合并"], ["thicken", "加厚/ 偏移"]]} />
          <Tools items={[["split", "分割"], ["direct", "直接"], ["deleteFace", "删除 面"]]} />
        </Panel>
        <Panel label="探索" min={58}>
          <Big icon="shape" lines={["形状", "生成器"]} />
        </Panel>
        <Panel label="定位特征" min={133} gap={5} indent={3}>
          <Big icon="plane" lines={["平面"]} menu />
          <Tools items={[["axis", "轴", true], ["point", "点", true], ["ucs", "UCS"]]} />
        </Panel>
        <Panel label="阵列" min={68}>
          <Tiles cols="29px 29px" gap={2} names={["rectPattern", "mirror", "circPattern", "", "sketchPattern"]} />
        </Panel>
        <Panel label="创建自由造型" min={147} gap={5} indent={3}>
          <Big icon="box" lines={["长方体"]} menu width={60} />
          <Tools items={[["face", "面"], ["convert", "转换"]]} />
        </Panel>
        <Panel label="曲面" min={98}>
          <Tiles cols="29px 29px 29px" gap={1} names={["stitch", "ruled", "replace", "patch", "trim", "repair", "sculpt", "extend", "copyObject"]} />
        </Panel>
        <Panel label="参数" menu min={61}>
          <Big icon="params" lines={["参数"]} />
        </Panel>
        <Panel label="塑料零件" start min={202}>
          <Tools items={[["grill", "栅格孔"], ["boss", "凸柱"], ["rest", "支撑台"]]} />
          <Tools items={[["snap", "卡扣式连接"], ["ruleFillet", "规则圆角"], ["lip", "止口"]]} />
        </Panel>
        <Panel label="iPart/iAssembly" min={126}>
          <TileGrid $cols="29px 15px">
            <Tile aria-label="创建 iPart">
              <Icon name="ipart" />
            </Tile>
            <span />
            <Tile aria-label="创建 iAssembly">
              <Icon name="factory" />
            </Tile>
            <span />
            <Tile aria-label="编辑表">
              <Icon name="author" />
            </Tile>
            <Tile aria-label="更多">
              <Caret />
            </Tile>
          </TileGrid>
        </Panel>
        <Panel label="分析" min={74}>
          <Big icon="stress" lines={["应力分析"]} width={60} />
        </Panel>
        <Panel label="" min={80}>
          <Big icon="" lines={["转换为钣金"]} width={80} />
        </Panel>
      </Ribbon>

      <Work>
        <Browser>
          <BrowserHead>
            <QuickButton aria-label="搜索浏览器">
              <svg width="15" height="15" viewBox="0 0 15 15" fill="none" stroke="#606060" strokeWidth="2">
                <circle cx="6" cy="6" r="5" />
                <path d="m10 10 4 4" strokeWidth="2.500" />
              </svg>
            </QuickButton>
            <QuickButton aria-label="菜单">
              <svg width="14" height="12" viewBox="0 0 14 12">
                <path d="M0 1h14M0 6h14M0 11h14" stroke="#606060" strokeWidth="2" />
              </svg>
            </QuickButton>
          </BrowserHead>
          <ScrollTrack>
            <ScrollButton aria-label="向上">
              <svg width="10" height="8" viewBox="0 0 10 8">
                <path d="m1 6 4-4 4 4" fill="none" stroke="#999" strokeWidth="1.800" />
              </svg>
            </ScrollButton>
            <ScrollThumb />
            <ScrollRest />
            <ScrollButton aria-label="向下">
              <svg width="10" height="8" viewBox="0 0 10 8">
                <path d="m1 2 4 4 4-4" fill="none" stroke="#999" strokeWidth="1.800" />
              </svg>
            </ScrollButton>
          </ScrollTrack>
        </Browser>
        <Stage>
          <Canvas>
            <Block />
            <AxisTriad />
          </Canvas>
          <DocTabs>
            <HomeButton aria-label="主页">
              <Icon name="home" />
            </HomeButton>
            <DocTab>
              数铣零件5.ipt
              <QuickButton aria-label="关闭">
                <svg width="11" height="11" viewBox="0 0 11 11">
                  <path d="m1 1 9 9m0-9-9 9" stroke="#606060" strokeWidth="2.200" />
                </svg>
              </QuickButton>
            </DocTab>
          </DocTabs>
        </Stage>
      </Work>

      <StatusBar>
        <Ime>
          <svg width="40" height="38" viewBox="0 0 40 38">
            <path d="M4 7 30 1q3-.500 4 2l5 25q0 3-3 4l-24 6q-3 0-4-3L1 10q0-3 3-3z" fill="#f1551c" />
            <path d="M4 7 30 1q3-.500 4 2l1 8L2 16 1 10q0-3 3-3z" fill="#f67a48" opacity=".5" />
            <text x="20" y="32" textAnchor="middle" fontFamily="DejaVu Sans" fontWeight="bold" fontStyle="oblique" fontSize="36" fill="#fff">
              S
            </text>
          </svg>
          <ImeBar>
            <span>中</span>
            <span>°,</span>
          </ImeBar>
        </Ime>
      </StatusBar>
      <Taskbar>
        <TaskSearch>
          <svg width="32" height="8" viewBox="0 0 32 8">
            <path d="m0 8 6-5 2 5z" fill="#b8653c" />
            <path d="M6 4q10-6 14 2M8 6q7-4 10 2" fill="none" stroke="#333" strokeWidth="1.200" />
            <path d="M22 7h8" stroke="#ddd" />
          </svg>
        </TaskSearch>
        <TaskItem />
      </Taskbar>
    </Window>
  );
}
